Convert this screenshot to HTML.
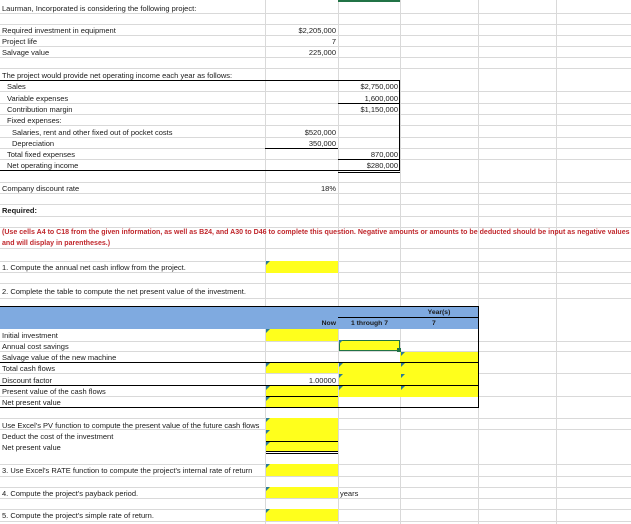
<!DOCTYPE html>
<html><head><meta charset="utf-8"><style>
body{margin:0;width:631px;height:524px;overflow:hidden;background:#fff;position:relative;font-family:"Liberation Sans",sans-serif;font-size:7.5px;color:#1a1a1a}
div{position:absolute;box-sizing:border-box}
.h{left:0;width:631px;height:1px;background:#d9d9d9}
.v{top:0;height:524px;width:1px;background:#d9d9d9}
.t{white-space:nowrap;line-height:9px}
.r{text-align:right}
.y{background:#ffff1c}
.k{background:#000}
.tri{width:0;height:0;border-top:4px solid #2a7a98;border-right:4px solid transparent}
</style></head><body>
<div class="h" style="top:13px"></div><div class="h" style="top:24px"></div><div class="h" style="top:35px"></div><div class="h" style="top:46px"></div><div class="h" style="top:57px"></div><div class="h" style="top:68px"></div>
<div class="h" style="top:91px"></div><div class="h" style="top:103px"></div><div class="h" style="top:114px"></div><div class="h" style="top:125px"></div><div class="h" style="top:137px"></div><div class="h" style="top:148px"></div><div class="h" style="top:159px"></div><div class="h" style="top:182px"></div><div class="h" style="top:193px"></div>
<div class="h" style="top:204px"></div><div class="h" style="top:216px"></div><div class="h" style="top:227px"></div><div class="h" style="top:248px"></div><div class="h" style="top:261px"></div><div class="h" style="top:272px"></div><div class="h" style="top:283px"></div><div class="h" style="top:298px"></div>
<div class="h" style="top:341px"></div><div class="h" style="top:351px"></div><div class="h" style="top:373px"></div><div class="h" style="top:396px"></div>
<div class="h" style="top:418px"></div><div class="h" style="top:429px"></div><div class="h" style="top:464px"></div><div class="h" style="top:476px"></div><div class="h" style="top:487px"></div><div class="h" style="top:498px"></div><div class="h" style="top:509px"></div><div class="h" style="top:521px"></div>
<div class="v" style="left:265px"></div><div class="v" style="left:338px"></div><div class="v" style="left:400px"></div><div class="v" style="left:478px"></div><div class="v" style="left:556px"></div>
<div style="left:338px;top:0;width:62px;height:2px;background:#217346"></div>

<div class="t" style="left:2px;top:4px">Laurman, Incorporated is considering the following project:</div>
<div class="t" style="left:2px;top:26px">Required investment in equipment</div>
<div class="t r" style="left:266px;width:70px;top:26px">$2,205,000</div>
<div class="t" style="left:2px;top:37px">Project life</div>
<div class="t r" style="left:266px;width:70px;top:37px">7</div>
<div class="t" style="left:2px;top:48px">Salvage value</div>
<div class="t r" style="left:266px;width:70px;top:48px">225,000</div>
<div class="t" style="left:2px;top:71px">The project would provide net operating income each year as follows:</div>
<div class="k" style="left:0;top:80px;width:400px;height:1px"></div>
<div class="k" style="left:399px;top:80px;width:1px;height:91px"></div>
<div class="t" style="left:7px;top:82px">Sales</div>
<div class="t r" style="left:339px;width:59px;top:82px">$2,750,000</div>
<div class="t" style="left:7px;top:94px">Variable expenses</div>
<div class="t r" style="left:339px;width:59px;top:94px">1,600,000</div>
<div class="k" style="left:338px;top:103px;width:62px;height:1px"></div>
<div class="t" style="left:7px;top:105px">Contribution margin</div>
<div class="t r" style="left:339px;width:59px;top:105px">$1,150,000</div>
<div class="t" style="left:7px;top:116px">Fixed expenses:</div>
<div class="t" style="left:12px;top:128px">Salaries, rent and other fixed out of pocket costs</div>
<div class="t r" style="left:266px;width:70px;top:128px">$520,000</div>
<div class="t" style="left:12px;top:139px">Depreciation</div>
<div class="t r" style="left:266px;width:70px;top:139px">350,000</div>
<div class="k" style="left:265px;top:148px;width:73px;height:1px"></div>
<div class="t" style="left:7px;top:150px">Total fixed expenses</div>
<div class="t r" style="left:339px;width:59px;top:150px">870,000</div>
<div class="k" style="left:338px;top:159px;width:62px;height:1px"></div>
<div class="t" style="left:7px;top:161px">Net operating income</div>
<div class="t r" style="left:339px;width:59px;top:161px">$280,000</div>
<div class="k" style="left:0;top:170px;width:338px;height:1px"></div>
<div class="k" style="left:338px;top:170px;width:62px;height:1px"></div>
<div class="k" style="left:338px;top:172px;width:62px;height:1px"></div>
<div class="t" style="left:2px;top:184px">Company discount rate</div>
<div class="t r" style="left:266px;width:70px;top:184px">18%</div>

<div class="t" style="left:2px;top:206px;font-weight:bold">Required:</div>
<div class="t" style="left:2px;top:228px;color:#c0282d;font-weight:bold;font-size:7.05px">(Use cells A4 to C18 from the given information, as well as B24, and A30 to D46 to complete this question. Negative amounts or amounts to be deducted should be input as negative values</div>
<div class="t" style="left:2px;top:239px;color:#c0282d;font-weight:bold;font-size:7.05px">and will display in parentheses.)</div>
<div class="y" style="left:266px;top:261px;width:72px;height:12px"></div><div class="tri" style="left:266px;top:261px"></div>
<div class="t" style="left:2px;top:263px">1. Compute the annual net cash inflow from the project.</div>
<div class="t" style="left:2px;top:287px">2. Complete the table to compute the net present value of the investment.</div>

<div style="left:0;top:306px;width:478px;height:23px;background:#7faae0"></div>
<div class="k" style="left:0;top:306px;width:479px;height:1px"></div>
<div class="k" style="left:478px;top:306px;width:1px;height:102px"></div>
<div class="k" style="left:338px;top:317px;width:140px;height:1px"></div>
<div class="t" style="left:400px;width:78px;top:308px;text-align:center;font-weight:bold;font-size:6.8px">Year(s)</div>
<div class="t r" style="left:266px;width:70px;top:319px;font-weight:bold;font-size:6.8px">Now</div>
<div class="t" style="left:351px;top:319px;font-weight:bold;font-size:6.8px">1 through 7</div>
<div class="t" style="left:432px;top:319px;font-weight:bold;font-size:6.8px">7</div>

<div class="y" style="left:266px;top:329px;width:72px;height:12px"></div><div class="tri" style="left:266px;top:329px"></div>
<div class="y" style="left:339px;top:340px;width:61px;height:11px;border:1px solid #217346"></div><div class="tri" style="left:339px;top:340px"></div>
<div style="left:397px;top:348px;width:4px;height:4px;background:#217346"></div>
<div class="y" style="left:400px;top:352px;width:78px;height:10px"></div><div class="tri" style="left:401px;top:352px"></div>
<div class="y" style="left:266px;top:362px;width:72px;height:11px"></div>
<div class="y" style="left:339px;top:362px;width:139px;height:35px"></div>
<div class="y" style="left:266px;top:385px;width:72px;height:22px"></div>
<div class="tri" style="left:266px;top:363px"></div><div class="tri" style="left:339px;top:363px"></div><div class="tri" style="left:401px;top:363px"></div>
<div class="tri" style="left:339px;top:374px"></div><div class="tri" style="left:401px;top:374px"></div>
<div class="tri" style="left:266px;top:386px"></div><div class="tri" style="left:339px;top:386px"></div><div class="tri" style="left:401px;top:386px"></div>
<div class="tri" style="left:266px;top:397px"></div>
<div class="k" style="left:0;top:362px;width:478px;height:1px"></div>
<div class="k" style="left:0;top:385px;width:478px;height:1px"></div>
<div class="k" style="left:266px;top:396px;width:72px;height:1px"></div>
<div class="k" style="left:0;top:407px;width:479px;height:1px"></div>
<div class="t" style="left:2px;top:331px">Initial investment</div>
<div class="t" style="left:2px;top:342px">Annual cost savings</div>
<div class="t" style="left:2px;top:353px">Salvage value of the new machine</div>
<div class="t" style="left:2px;top:364px">Total cash flows</div>
<div class="t" style="left:2px;top:376px">Discount factor</div>
<div class="t r" style="left:266px;width:70px;top:376px">1.00000</div>
<div class="t" style="left:2px;top:387px">Present value of the cash flows</div>
<div class="t" style="left:2px;top:398px">Net present value</div>

<div class="y" style="left:266px;top:418px;width:72px;height:34px"></div>
<div class="tri" style="left:266px;top:418px"></div><div class="tri" style="left:266px;top:430px"></div><div class="tri" style="left:266px;top:442px"></div>
<div class="k" style="left:266px;top:441px;width:72px;height:1px"></div>
<div class="k" style="left:266px;top:451px;width:72px;height:1px"></div>
<div class="k" style="left:266px;top:453px;width:72px;height:1px"></div>
<div class="t" style="left:2px;top:421px">Use Excel's PV function to compute the present value of the future cash flows</div>
<div class="t" style="left:2px;top:432px">Deduct the cost of the investment</div>
<div class="t" style="left:2px;top:443px">Net present value</div>
<div class="y" style="left:266px;top:464px;width:72px;height:12px"></div><div class="tri" style="left:266px;top:464px"></div>
<div class="t" style="left:2px;top:466px">3. Use Excel's RATE function to compute the project's internal rate of return</div>
<div class="y" style="left:266px;top:487px;width:72px;height:11px"></div><div class="tri" style="left:266px;top:487px"></div>
<div class="t" style="left:2px;top:489px">4. Compute the project's payback period.</div>
<div class="t" style="left:340px;top:489px">years</div>
<div class="y" style="left:266px;top:509px;width:72px;height:12px"></div><div class="tri" style="left:266px;top:509px"></div>
<div class="t" style="left:2px;top:511px">5. Compute the project's simple rate of return.</div>
</body></html>
